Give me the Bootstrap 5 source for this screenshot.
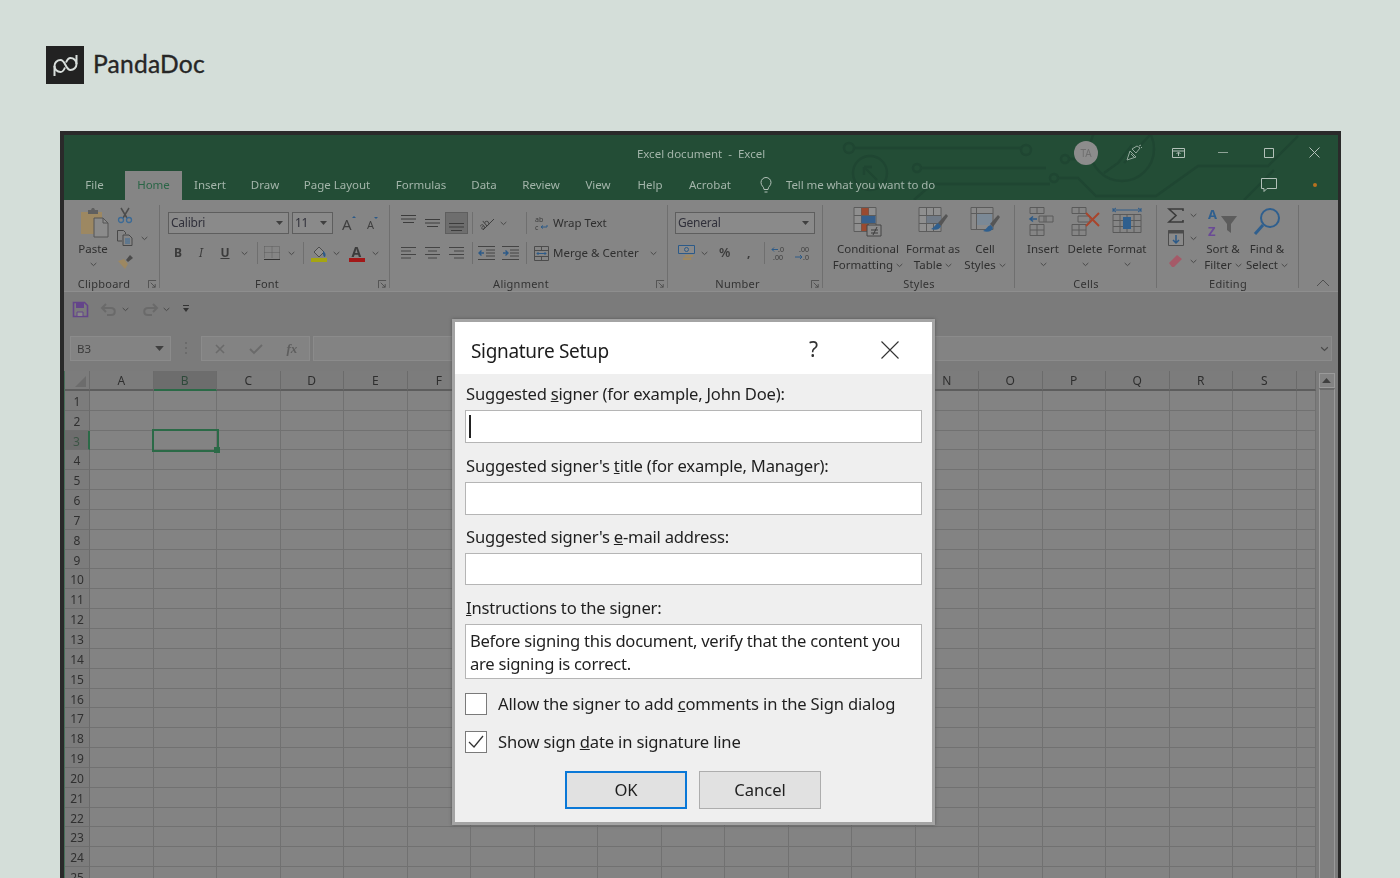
<!DOCTYPE html>
<html lang="en"><head><meta charset="utf-8"><title>PandaDoc - Signature Setup</title>
<link href="https://cdn.jsdelivr.net/npm/bootstrap@5.3.0/dist/css/bootstrap.min.css" rel="stylesheet">
<style>
html,body{height:878px;overflow:hidden}
body{background:#d4ded9;font-family:"Noto Sans","Open Sans",sans-serif;color:#2b2b2b;position:relative}
.brand{padding:46px 0 0 46px;height:84px;gap:9px}
.brand svg{width:38px;height:38px;display:block}
.brand span{font:400 24.6px/36px Lato,Inter,sans-serif;color:#262626;letter-spacing:.2px;-webkit-text-stroke:.35px #262626;padding-bottom:2px}
.win{margin:47px 59px 0 60px;border:solid #2a2a2a;border-width:4px 3px 0 4px;height:760px;background:#7b7b7b;filter:blur(.4px)}
svg{flex:none;overflow:visible}
.chrome{background:#234d36;position:relative;overflow:hidden}
.titlebar{height:35px;color:#a3b5aa;font-size:11.5px;position:relative}
.titlebar>.ttl{flex:1;text-align:center;padding-top:3px}
.wb{height:35px;justify-content:center}
.w44{width:44px}.w46{width:46px}.w52{width:52px}
.rightctl{padding-right:2px}
.lspacer{width:278px;flex:none}
.avatar{width:24px;height:24px;border-radius:50%;background:#8c8c8c;color:#6f6f6f;font-size:10px;line-height:24px;text-align:center}
.circuit{position:absolute;left:0;top:0;width:1274px;height:65px;pointer-events:none;overflow:hidden}
.tabs{height:30px;color:#a3b5aa;font-size:11.5px;position:relative}
.tab{text-align:center;line-height:30px;flex:none}
.tab.on{background:#858585;color:#2a6546;margin-top:1px;line-height:28px}
.t48{width:48px}.t54{width:54px}.t56{width:56px}.t57{width:57px}.t61{width:61px}.t64{width:64px}.t66{width:66px}.t78{width:78px}.t90{width:90px}
.bulb{margin-left:18px}
.tell{margin-left:14px;white-space:nowrap;letter-spacing:-.1px}
.cmt-dot{margin:0 21px 0 36px}
.ribbon{height:92px;background:#858585;border-bottom:1px solid #8e8e8e;font-size:11.5px;color:#2f2f2f}
.rg{height:92px;flex:none;display:flex;flex-direction:column;position:relative}
.rg:after{content:"";position:absolute;right:0;top:5px;bottom:4px;width:1px;background:#6f6f6f}
.rg-body{height:76px;flex:none}
.rg-label{height:16px;display:flex;font-size:11px;line-height:15px;letter-spacing:.25px;color:#333}
.rg-label span{flex:1;text-align:center}
.launch{width:16px;flex:none;padding:4px 0 0 4px}
.launch svg{display:block}
.c-clip{width:96px}.c-font{width:230px}.c-align{width:278px}.c-num{width:155px}.c-sty{width:192px}.c-cell{width:142px}.c-edit{width:142px}
.stack{padding-top:12px;display:flex;flex-direction:column;gap:8px}
.r22{height:22px;display:flex;align-items:center}
.at{align-self:flex-start;margin-top:3px}
.combo{height:22px;border:1px solid #5e5e5e;background:#8a8a8a;display:flex;align-items:center;justify-content:space-between;padding:0 5px 0 2px;font-size:12px;letter-spacing:-.25px;color:#30303a}
.w121{width:121px}.w41{width:41px}.w140{width:140px}
.bi{font:700 12px/22px "Noto Sans",sans-serif;width:12px;text-align:center;color:#3b3b3b}
.bi.i{font-style:italic;font-weight:400}.bi.u{text-decoration:underline}
.pct{width:13px;font-size:13px;font-weight:600;color:#3c3c3c}
.cma{width:6px;font-size:12px;font-weight:700;color:#3c3c3c}
.vs{width:1px;height:22px;background:#6f6f6f;flex:none}
.pressed{width:23px;height:22px;background:#6e6e6e;border:1px solid #5e5e5e;display:flex;align-items:flex-end;justify-content:center;padding-bottom:2px}
.pressed svg{display:block}
.big{padding-top:7px;display:flex;flex-direction:column;align-items:center;text-align:center;line-height:16px;white-space:nowrap;flex:none}
.big svg.ic{width:30px;height:30px;margin-bottom:4px}
.big .cv{margin-top:5px}
.w72{width:72px}.w58{width:58px}.w46b{width:46px}.w42{width:42px}.w44b{width:44px}.w33{width:33px}
.small3{padding-top:7px;display:flex;flex-direction:column;gap:7px;flex:none}
.small3>div{height:16px;display:flex;align-items:center}
.l2{margin-left:2px}.l3{margin-left:3px}.l4{margin-left:4px}.l5{margin-left:5px}.l6{margin-left:6px}.l7{margin-left:7px}.l8{margin-left:8px}.l9{margin-left:9px}.l10{margin-left:10px}.l11{margin-left:11px}.l12{margin-left:12px}.l13{margin-left:13px}.l15{margin-left:15px}.l19{margin-left:19px}
.collapse-up{flex:1;display:flex;justify-content:flex-end;align-items:flex-end;padding:0 8px 4px 0}
.qat{height:40px;background:#7b7b7b;padding-left:9px;padding-bottom:6px}
.fbar{height:39px;background:#7b7b7b;padding:4px 6px 10px 6px;font-size:11.5px}
.fbox{height:25px;background:#838383;border:1px solid #8b8b8b;display:flex;align-items:center}
.namebox{width:101px;justify-content:space-between;padding:0 6px;color:#3a3a3a}
.dots{width:30px;justify-content:center}
.fxbox{width:109px;justify-content:space-around}
.fxbox i{font:italic 700 13px "Liberation Serif",serif;color:#5e5e5e}
.finput{flex:1;margin-left:3px;justify-content:flex-end;padding-right:2px}
.sheet{padding-left:1px;background:#47705a}
.grid{display:grid;grid-template-columns:25px repeat(19,63.5px) 19px;grid-auto-rows:19.85px;font-size:12px;background:#838383}
.grid>div{border-right:1px solid #717171;border-bottom:1px solid #717171;position:relative}
.grid .ch{background:#7c7c7c;color:#2f2f2f;text-align:center;line-height:20px;border-bottom:2px solid #5d5d5d;border-right-color:#6b6b6b}
.grid .rh{background:#7c7c7c;color:#303030;text-align:center;line-height:21px;border-right:1px solid #6b6b6b;border-bottom-color:#6e6e6e}
.grid .ch.sel{background:#6d6d6d;border-bottom-color:#2b6a47;color:#2f4a3b}
.grid .rh.sel{background:#6d6d6d;border-right:2px solid #2b6a47;color:#3d5546}
.grid .corner:after{content:"";position:absolute;right:3px;bottom:2px;border-style:solid;border-width:0 0 11px 11px;border-color:transparent transparent #6c6c6c transparent}
.grid .cur{outline:2px solid #2b6a47;outline-offset:0;z-index:2}
.grid .cur:after{content:"";position:absolute;right:-4px;bottom:-4px;width:6px;height:6px;background:#2b6a47}
.vbar{flex:1;padding:2px 0 0 3px;background:#7b7b7b}
.vbar .up{width:16px;height:15px;border:1px solid #9a9a9a;background:#838383;display:flex;align-items:center;justify-content:center}
.vbar .tr{width:16px;height:500px;border:1px solid #9a9a9a;background:#7f7f7f;border-top:2px solid #6a6a6a}
.dlg{position:absolute;left:452px;top:319px;width:483px;height:506px;border:3px solid #a4a4a4;background:#efefef;box-shadow:0 0 3px #555;filter:blur(.25px);font-size:16.6px;letter-spacing:-.22px;color:#1f1f1f;z-index:5}
.dlg-head{height:52px;background:#fff;padding:0 33px 0 16px}
.dlg-head h1{font:400 19px/58px "Noto Sans",sans-serif;letter-spacing:-.32px;margin:0;flex:1;color:#1c1c1c}
.dlg-q{font-size:21px;width:72px;color:#333;line-height:54px}
.dlg-x{margin-top:19px}
.dlg-body{padding:9px 10px 0 10px}
.flabel{display:block;height:24px;line-height:22px;margin:11px 0 3px 1px;white-space:nowrap}
.flabel.first{margin-top:0}.flabel.t12{margin-top:12px}
.dlg .form-control{border:1px solid #b5b5b5;border-radius:0;height:33px;padding:0;background:#fff;box-shadow:none}
.dlg .h32{height:32px}
.dlg .ta{height:55px;padding:4px 4px 0;font-size:16.6px;line-height:23px;letter-spacing:-.26px;color:#1f1f1f}
.caret-bar{position:absolute;left:4px;top:5px;width:2px;height:23px;background:#222}
.chk{height:22px;display:flex;align-items:center;gap:11px;margin:0;line-height:22px;letter-spacing:-.17px}
.chk .box{width:22px;height:22px;border:1px solid #7a7a7a;background:#fff;flex:none;display:flex;align-items:center;justify-content:center}
.chk1{margin-top:14px}.chk2{margin-top:16px}
.btns{margin-top:18px;gap:12px;padding-left:100px}
.dlg .btn{width:122px;height:38px;border-radius:0;background:#e1e1e1;border:1px solid #adadad;font-size:16.6px;color:#1f1f1f;padding:0;line-height:36px}
.dlg .btn.def{border:2px solid #0a78d7;line-height:34px}
</style></head><body>
<svg width="0" height="0" class="position-absolute"><defs>
<symbol id="cv" viewBox="0 0 7 5"><path d="M.7 1 3.500 3.600 6.300 1" fill="none" stroke="#4a4a4a" stroke-width="1"/></symbol>
<symbol id="tri" viewBox="0 0 7 4"><path d="M0 0h7L3.500 4z" fill="#3f3f3f"/></symbol>
<symbol id="lau" viewBox="0 0 10 10"><path d="M.5 9V.5H9M3 3l5 5M8 4.500V8H4.500" fill="none" stroke="#4c4c4c"/></symbol>
<symbol id="lines1" viewBox="0 0 15 8"><path d="M0 .5h15M0 4h15M2 7.500h11" stroke="#3c3c3c"/></symbol>
<symbol id="alL" viewBox="0 0 15 12"><path d="M0 .5h15M0 4h10M0 7.500h15M0 11h10" stroke="#444"/></symbol>
<symbol id="alC" viewBox="0 0 15 12"><path d="M0 .5h15M3 4h9M0 7.500h15M3 11h9" stroke="#444"/></symbol>
<symbol id="alR" viewBox="0 0 15 12"><path d="M0 .5h15M5 4h10M0 7.500h15M5 11h10" stroke="#444"/></symbol>
<symbol id="indL" viewBox="0 0 17 14"><path d="M0 .5h17M8 4h9M8 7h9M8 10h9M0 13.500h17" stroke="#444"/><path d="M6 7H1M3.500 4.500 1 7l2.500 2.500" fill="none" stroke="#2c5a88" stroke-width="1.400"/></symbol>
<symbol id="indR" viewBox="0 0 17 14"><path d="M0 .5h17M8 4h9M8 7h9M8 10h9M0 13.500h17" stroke="#444"/><path d="M1 7h5M3.500 4.500 6 7 3.500 9.500" fill="none" stroke="#2c5a88" stroke-width="1.400"/></symbol>
<symbol id="gridic" viewBox="0 0 30 30"><path d="M1 .5h22v24H1zM1 8.500h22M1 16.500h22M8.500.5v24M15.500.5v24" fill="#8f8f8f" stroke="#5c5c5c"/></symbol>
</defs></svg>

<header class="brand d-flex align-items-center">
<svg viewBox="0 0 38 38" role="img" aria-label="PandaDoc logo"><rect width="38" height="38" fill="#222"/><path d="M8.500 30V20a6 6 0 0 1 6-6c5 0 5 10 10 10a6 6 0 0 0 6-6V9" fill="none" stroke="#d8dedb" stroke-width="2"/><path d="M8.500 20a6 6 0 0 0 6 6c2.500 0 3.500-2 4.500-4.500M30.500 18a6 6 0 0 0-6-6c-2.500 0-3.500 2-4.500 4.500" fill="none" stroke="#d8dedb" stroke-width="2"/></svg>
<span>PandaDoc</span>
</header>

<main class="win d-flex flex-column">
<div class="chrome">
<svg class="circuit" viewBox="0 0 1274 65"><g fill="none" stroke="#1f4632" stroke-width="2.400"><circle cx="962" cy="15" r="5"/><path d="M790 13H957"/><circle cx="785" cy="13" r="5"/><circle cx="1058" cy="14" r="32"/><circle cx="806" cy="38" r="17"/><path d="M800 32l13 13M800 32h8M800 32v8"/><circle cx="853" cy="33" r="4"/><circle cx="1001" cy="24" r="4"/><circle cx="990" cy="43" r="4"/><path d="M857 33h125M994 43h20l18 18h60l42-30h70l30-30M1005 24h24M1060 28 1086 0M850 65l18-16h118M1180 65l30-30"/><path d="M1040 38l14-10 14-18"/></g></svg>
<div class="titlebar d-flex align-items-center">
<div class="lspacer"></div><div class="ttl position-relative">Excel document&nbsp; -&nbsp; Excel</div>
<div class="d-flex position-relative rightctl"><div class="wb d-flex align-items-center w52"><div class="avatar">TA</div></div>
<div class="wb d-flex align-items-center w44"><svg width="16" height="16" viewBox="0 0 16 16"><path d="M1 15l3-9 6 6zM5 9l3 3M6 4l4 4 4-5-3-2zM13 1l2-1M15 3l1-1" fill="none" stroke="#93a89c"/></svg></div>
<div class="wb d-flex align-items-center w44"><svg width="13" height="10" viewBox="0 0 13 10"><path d="M.5.5h12v9H.5zM.5 3h12M6.500 8V4.500M4.500 6l2-2 2 2" fill="none" stroke="#b3c1b9"/></svg></div>
<div class="wb d-flex align-items-center w46"><svg width="10" height="1"><path d="M0 .5h10" stroke="#8fa397"/></svg></div>
<div class="wb d-flex align-items-center w46"><svg width="10" height="10"><path d="M.5.5h9v9h-9z" fill="none" stroke="#b3c1b9"/></svg></div>
<div class="wb d-flex align-items-center w44"><svg width="11" height="11"><path d="M.5.5l10 10M10.500.5l-10 10" stroke="#b3c1b9"/></svg></div></div>
</div>
<nav class="tabs d-flex">
<div class="tab t61">File</div><div class="tab on t57">Home</div><div class="tab t56">Insert</div><div class="tab t54">Draw</div><div class="tab t90">Page Layout</div><div class="tab t78">Formulas</div><div class="tab t48">Data</div><div class="tab t66">Review</div><div class="tab t48">View</div><div class="tab t56">Help</div><div class="tab t64">Acrobat</div>
<svg class="align-self-center bulb" width="12" height="16" viewBox="0 0 12 16"><path d="M4 12.500C4 9.500 1 9 1 5.500a5 5 0 0 1 10 0C11 9 8 9.500 8 12.500zM4.500 15h3" fill="none" stroke="#b3c1b9"/></svg>
<div class="tab tell">Tell me what you want to do</div>
<div class="ms-auto d-flex align-items-center">
<svg width="16" height="15" viewBox="0 0 16 15"><path d="M.5.5h15v10H6l-3 3v-3H.5z" fill="none" stroke="#b3c1b9"/></svg>
<svg class="cmt-dot" width="4" height="4"><circle cx="2" cy="2" r="2" fill="#b7711f"/></svg>
</div>
</nav>
</div>

<section class="ribbon d-flex">
<div class="rg c-clip">
 <div class="rg-body d-flex">
  <div class="big l7 w44b">
   <svg class="ic" viewBox="-2 0 30 30"><path d="M1 5h21v22H1z" fill="#9d8862"/><path d="M8 3h3l1-2h2l1 2h3v4H8z" fill="#5f5f5f"/><path d="M14 11h9l5 5v14H14z" fill="#8b8b8b" stroke="#555"/><path d="M23 11v5h5" fill="none" stroke="#555"/></svg>
   <div>Paste</div><svg class="cv" width="7" height="5"><use href="#cv"/></svg></div>
  <div class="small3 l2">
   <div><svg width="16" height="16" viewBox="0 0 16 16"><path d="M4 1l6 10M12 1L6 11" stroke="#4c4c4c" stroke-width="1.500"/><circle cx="4" cy="13" r="2.500" fill="none" stroke="#3b6a96" stroke-width="1.300"/><circle cx="12" cy="13" r="2.500" fill="none" stroke="#3b6a96" stroke-width="1.300"/></svg></div>
   <div><svg width="16" height="16" viewBox="0 0 16 16"><path d="M.5.5h6l2 2V4M.5.5V11H5M6 5h6l3 3v7.500H6z" fill="none" stroke="#484848"/><path d="M8 9h5M8 11h5M8 13h5" stroke="#3b6a96"/></svg><svg class="l8" width="7" height="5"><use href="#cv"/></svg></div>
   <div><svg width="16" height="15" viewBox="0 0 16 15"><path d="M1 7l6-2 4 5-3 5z" fill="#9d8862"/><path d="M9 6l4-5 3 3-5 4z" fill="#4b4b4b"/></svg></div>
  </div>
 </div>
 <div class="rg-label"><span>Clipboard</span><div class="launch"><svg width="9" height="9"><use href="#lau"/></svg></div></div>
</div>

<div class="rg c-font">
 <div class="rg-body stack">
  <div class="r22"><div class="combo w121 l8">Calibri<svg width="7" height="4"><use href="#tri"/></svg></div><div class="combo w41 l3">11<svg width="7" height="4"><use href="#tri"/></svg></div>
   <svg class="l9" width="14" height="16" viewBox="0 0 14 16"><text x="0" y="15" font-size="15" fill="#3f3f3f" font-family="Noto Sans">A</text><path d="M10 3l2-2 2 2z" fill="#2c5a88"/></svg>
   <svg class="l11" width="11" height="14" viewBox="0 0 11 14"><text x="0" y="13" font-size="11" fill="#3f3f3f" font-family="Noto Sans">A</text><path d="M7 1h4L9 3z" fill="#2c5a88"/></svg></div>
  <div class="r22"><div class="bi l12">B</div><div class="bi i l11">I</div><div class="bi u l12">U</div><svg class="l10" width="7" height="5"><use href="#cv"/></svg><div class="vs l9"></div>
   <svg class="l6" width="16" height="14" viewBox="0 0 16 14"><path d="M.5.5h15v12M.5.5v12M8 .5v12M.5 6.500h15" fill="none" stroke="#5c5c5c" stroke-dasharray="1 1"/><path d="M0 13.500h16" stroke="#333"/></svg><svg class="l8" width="7" height="5"><use href="#cv"/></svg><div class="vs l8"></div>
   <svg class="l7" width="16" height="17" viewBox="0 0 16 17"><path d="M3 7l5-5 5 5-5 5z" fill="#8f8f8f" stroke="#4c4c4c"/><path d="M12 6c3 2 3 4 2 6-2 0-2-3-2-6" fill="#2c5a88"/><path d="M0 13h16v4H0z" fill="#a5a512"/></svg><svg class="l6" width="7" height="5"><use href="#cv"/></svg>
   <svg class="l9" width="16" height="17" viewBox="0 0 16 17"><text x="2.500" y="12" font-size="14" font-weight="700" fill="#3c3c3c" font-family="Noto Sans">A</text><path d="M0 13h16v4H0z" fill="#a21818"/></svg><svg class="l7" width="7" height="5"><use href="#cv"/></svg></div>
 </div>
 <div class="rg-label"><span>Font</span><div class="launch"><svg width="9" height="9"><use href="#lau"/></svg></div></div>
</div>

<div class="rg c-align">
 <div class="rg-body stack">
  <div class="r22"><svg class="l11 at" width="15" height="8"><use href="#lines1"/></svg><svg class="l9" width="15" height="8"><use href="#lines1"/></svg><div class="pressed l5"><svg width="15" height="8"><use href="#lines1"/></svg></div><div class="vs l4"></div>
   <svg class="l6" width="16" height="15" viewBox="0 0 16 15"><text x="0" y="11" font-size="9" fill="#3f3f3f" transform="rotate(-40 6 8)" font-family="Noto Sans">ab</text><path d="M4 14 15 3" stroke="#3f3f3f"/></svg><svg class="l5" width="7" height="5"><use href="#cv"/></svg><div class="vs l19"></div>
   <svg class="l8" width="13" height="15" viewBox="0 0 13 15"><text x="0" y="5.500" font-size="7" fill="#3c3c3c" font-family="Noto Sans">ab</text><text x="0" y="14" font-size="7" fill="#3c3c3c" font-family="Noto Sans">c</text><path d="M6 11h6v-2M6 11l2-1.500M6 11l2 1.500" fill="none" stroke="#2c5a88"/></svg><div class="l5 text-nowrap">Wrap Text</div></div>
  <div class="r22"><svg class="l11" width="15" height="12"><use href="#alL"/></svg><svg class="l9" width="15" height="12"><use href="#alC"/></svg><svg class="l9" width="15" height="12"><use href="#alR"/></svg><div class="vs l8"></div>
   <svg class="l5" width="17" height="14"><use href="#indL"/></svg><svg class="l7" width="17" height="14"><use href="#indR"/></svg><div class="vs l7"></div>
   <svg class="l7" width="15" height="15" viewBox="0 0 15 15"><path d="M.5.5h14v14H.500zM.5 4.500h14M.5 10.500h14M7.500.5v4M7.500 10.500v4" fill="none" stroke="#4c4c4c"/><path d="M3 7.500h9M3 7.500l1.500-1.500M3 7.500 4.500 9M12 7.500 10.500 6M12 7.500 10.500 9" fill="none" stroke="#2c5a88"/></svg><div class="l4 text-nowrap">Merge &amp; Center</div><svg class="l11" width="7" height="5"><use href="#cv"/></svg></div>
 </div>
 <div class="rg-label"><span>Alignment</span><div class="launch"><svg width="9" height="9"><use href="#lau"/></svg></div></div>
</div>

<div class="rg c-num">
 <div class="rg-body stack">
  <div class="r22"><div class="combo w140 l7">General<svg width="7" height="4"><use href="#tri"/></svg></div></div>
  <div class="r22"><svg class="l10" width="17" height="16" viewBox="0 0 17 16"><path d="M.5.5h16v8H.5z" fill="#8a8a8a" stroke="#2c5a88"/><circle cx="8.500" cy="4.500" r="2" fill="none" stroke="#2c5a88"/><path d="M7 10h8v2H7zM5 12.500h8V15H5z" fill="#9d8862"/></svg><svg class="l6" width="7" height="5"><use href="#cv"/></svg>
   <div class="l11 pct">%</div><div class="l15 cma">,</div><div class="vs l11"></div>
   <svg class="l7" width="16" height="15" viewBox="0 0 16 15"><text x="6" y="6" font-size="7" fill="#3c3c3c" font-family="Noto Sans">.0</text><text x="1" y="14" font-size="7" fill="#3c3c3c" font-family="Noto Sans">.00</text><path d="M6 3.500H0M2 1.500l-2 2 2 2" fill="none" stroke="#2c5a88"/></svg>
   <svg class="l7" width="16" height="15" viewBox="0 0 16 15"><text x="4" y="6" font-size="7" fill="#3c3c3c" font-family="Noto Sans">.00</text><text x="8" y="14" font-size="7" fill="#3c3c3c" font-family="Noto Sans">.0</text><path d="M0 11h7M5 9l2 2-2 2" fill="none" stroke="#2c5a88"/></svg></div>
 </div>
 <div class="rg-label"><span>Number</span><div class="launch"><svg width="9" height="9"><use href="#lau"/></svg></div></div>
</div>

<div class="rg c-sty">
 <div class="rg-body d-flex">
  <div class="big l9 w72"><svg class="ic" viewBox="0 0 30 30"><use href="#gridic"/><path d="M8.500 1h7v7h-7z" fill="#9a4a30"/><path d="M8.500 9h14v7h-14z" fill="#365f8c"/><path d="M8.500 17h7v7h-7z" fill="#9a4a30"/><path d="M14 18h14v11H14z" fill="#8a8a8a" stroke="#444"/><path d="M18 23h7M18 26h7M20 28l4-8" stroke="#3c3c3c" fill="none"/></svg><div>Conditional</div><div>Formatting <svg width="7" height="5"><use href="#cv"/></svg></div></div>
  <div class="big w58"><svg class="ic" viewBox="0 0 30 30"><use href="#gridic"/><path d="M8.500 9H23v7H8.500z" fill="#707a86"/><path d="M13 22c4-2 5-6 8-6l2 3c-1 3-5 5-10 3z" fill="#2f5f8e"/><path d="M20 16 28 7l2 2-7 10z" fill="#555"/></svg><div>Format as</div><div>Table <svg width="7" height="5"><use href="#cv"/></svg></div></div>
  <div class="big w46b"><svg class="ic" viewBox="0 0 30 30"><path d="M1 .5h22v22H1zM1 6.500h22M6.500.5v22" fill="#8a8a8a" stroke="#5c5c5c"/><path d="M7 7h15v11H7z" fill="#7b8996"/><path d="M13 24c4-2 5-6 8-6l2 3c-1 3-5 5-10 3z" fill="#2f5f8e"/><path d="M20 17 28 8l2 2-7 10z" fill="#555"/></svg><div>Cell</div><div>Styles <svg width="7" height="5"><use href="#cv"/></svg></div></div>
 </div>
 <div class="rg-label"><span>Styles</span></div>
</div>

<div class="rg c-cell">
 <div class="rg-body d-flex">
  <div class="big l7 w42"><svg class="ic" viewBox="0 0 30 30"><path d="M2 .5h14v6H2zM9 .5v6M11 9h14v6H11zM18 9v6M16 9v6M2 17.500h14v11H2zM2 23h14M9 17.500v11" fill="none" stroke="#5a5a5a"/><path d="M9 12H2M5 9.500 2 12l3 2.500" fill="none" stroke="#2c5a88" stroke-width="1.500"/></svg><div>Insert</div><svg class="cv" width="7" height="5"><use href="#cv"/></svg></div>
  <div class="big w42"><svg class="ic" viewBox="0 0 30 30"><path d="M2 .5h14v6H2zM9 .5v6M8 9h12v6H8zM2 17.500h14v11H2zM2 23h14M9 17.500v11" fill="none" stroke="#5a5a5a"/><path d="M16 6 29 19M29 6 16 19" stroke="#a8452c" stroke-width="2"/></svg><div>Delete</div><svg class="cv" width="7" height="5"><use href="#cv"/></svg></div>
  <div class="big w42"><svg class="ic" viewBox="0 0 30 30"><path d="M1 7.500h28v18H1zM1 13.500h28M1 19.500h28M8 7.500v18M15 7.500v18M22 7.500v18" fill="none" stroke="#5a5a5a"/><path d="M11 10h8v12h-8z" fill="#2f5f8e"/><path d="M1 3h28M1 1v4M29 1v4M1 3l3-2M1 3l3 2M29 3l-3-2M29 3l-3 2" fill="none" stroke="#2c5a88"/></svg><div>Format</div><svg class="cv" width="7" height="5"><use href="#cv"/></svg></div>
 </div>
 <div class="rg-label"><span>Cells</span></div>
</div>

<div class="rg c-edit">
 <div class="rg-body d-flex">
  <div class="small3 l11 w33">
   <div><svg width="16" height="15" viewBox="0 0 16 15"><path d="M15 3V1H1l7 6.500L1 14h14v-2" fill="none" stroke="#3b3b3b" stroke-width="1.600"/></svg><svg class="l6" width="7" height="5"><use href="#cv"/></svg></div>
   <div><svg width="16" height="16" viewBox="0 0 16 16"><path d="M.5.5h15v15H.5z" fill="#8a8a8a" stroke="#4c4c4c"/><path d="M.5 0h15v3.500H.5z" fill="#4c4c4c"/><path d="M8 5v8M5 10l3 3 3-3" fill="none" stroke="#2c5a88" stroke-width="1.500"/></svg><svg class="l6" width="7" height="5"><use href="#cv"/></svg></div>
   <div><svg width="16" height="14" viewBox="0 0 16 14"><path d="M1 9l8-8 5 4-8 8H4z" fill="#a55a68"/></svg><svg class="l6" width="7" height="5"><use href="#cv"/></svg></div>
  </div>
  <div class="big w44b"><svg class="ic" viewBox="0 0 30 30"><text x="0" y="12" font-size="13" font-weight="700" fill="#2f5f8e" font-family="Noto Sans">A</text><text x="0" y="29" font-size="13" font-weight="700" fill="#6a4a96" font-family="Noto Sans">Z</text><path d="M13 9h16l-6 8v9l-4-3v-6z" fill="#5c5c5c"/></svg><div>Sort &amp;</div><div>Filter <svg width="7" height="5"><use href="#cv"/></svg></div></div>
  <div class="big w44b"><svg class="ic" viewBox="0 0 30 30"><circle cx="18" cy="11" r="9" fill="none" stroke="#2f5f8e" stroke-width="2"/><path d="M11 18 3 27" stroke="#2f5f8e" stroke-width="3"/></svg><div>Find &amp;</div><div>Select <svg width="7" height="5"><use href="#cv"/></svg></div></div>
 </div>
 <div class="rg-label"><span>Editing</span></div>
</div>
<div class="collapse-up"><svg width="14" height="8" viewBox="0 0 14 8"><path d="M1 7l6-6 6 6" fill="none" stroke="#4f4f4f"/></svg></div>
</section>

<div class="qat d-flex align-items-center">
<svg width="15" height="15" viewBox="0 0 15 15"><path d="M.5.5h11l3 3v11H.5z" fill="#7b7b7b" stroke="#64458a" stroke-width="1.600"/><path d="M3 1h8v5H3z" fill="#64458a"/><path d="M4 10h6v4.500H4z" fill="#8a8a8a" stroke="#64458a"/></svg>
<svg class="l13" width="16" height="13" viewBox="0 0 16 13"><path d="M1 5h9c5 0 5 7 0 7H6M5 1 1 5l4 4" fill="none" stroke="#6a6a6a" stroke-width="2"/></svg><svg class="l5" width="7" height="5"><use href="#cv"/></svg>
<svg class="l13" width="16" height="13" viewBox="0 0 16 13"><path d="M15 5H6C1 5 1 12 6 12h4M11 1l4 4-4 4" fill="none" stroke="#6a6a6a" stroke-width="2"/></svg><svg class="l5" width="7" height="5"><use href="#cv"/></svg>
<svg class="l13" width="6" height="8" viewBox="0 0 6 8"><path d="M0 .5h6" stroke="#333"/><path d="M0 3h6L3 7z" fill="#333"/></svg>
</div>

<div class="fbar d-flex">
<div class="fbox namebox">B3<svg width="9" height="5" viewBox="0 0 7 4"><use href="#tri"/></svg></div>
<div class="d-flex dots align-items-center"><svg width="2" height="13"><path d="M1 0v13" stroke="#5c5c5c" stroke-dasharray="2 3"/></svg></div>
<div class="fbox fxbox"><svg width="12" height="12" viewBox="0 0 12 12"><path d="M2 2l8 8M10 2l-8 8" stroke="#6a6a6a" stroke-width="1.600"/></svg><svg width="14" height="12" viewBox="0 0 14 12"><path d="M1 6l4 4 8-8" fill="none" stroke="#6a6a6a" stroke-width="1.800"/></svg><i>fx</i></div>
<div class="fbox finput"><svg width="9" height="6" viewBox="0 0 7 5"><use href="#cv"/></svg></div>
</div>

<div class="d-flex sheet">
<div class="grid" id="grid"></div>
<div class="vbar"><div class="up"><svg width="9" height="5" viewBox="0 0 7 4"><path d="M0 4h7L3.500 0z" fill="#3f3f3f"/></svg></div><div class="tr"></div></div>
</div>
</main>

<section class="dlg" role="dialog" aria-label="Signature Setup">
<div class="dlg-head d-flex align-items-start"><h1>Signature Setup</h1><div class="dlg-q">?</div><svg class="dlg-x" width="18" height="18" viewBox="0 0 18 18"><path d="M.5.5l17 17M17.500.5l-17 17" stroke="#333" stroke-width="1.100"/></svg></div>
<form class="dlg-body">
<label class="flabel first">Suggested <u>s</u>igner (for example, John Doe):</label>
<div class="position-relative"><input class="form-control" type="text" aria-label="Suggested signer"><span class="caret-bar"></span></div>
<label class="flabel t12">Suggested signer's <u>t</u>itle (for example, Manager):</label>
<input class="form-control" type="text" aria-label="Suggested signer's title">
<label class="flabel">Suggested signer's <u>e</u>-mail address:</label>
<input class="form-control h32" type="text" aria-label="Suggested signer's e-mail address">
<label class="flabel t12"><u>I</u>nstructions to the signer:</label>
<div class="form-control ta">Before signing this document, verify that the content you<br>are signing is correct.</div>
<div class="chk chk1"><span class="box"></span><span>Allow the signer to add <u>c</u>omments in the Sign dialog</span></div>
<div class="chk chk2"><span class="box"><svg width="16" height="14" viewBox="0 0 16 14"><path d="M1 7l5 5L15 1" fill="none" stroke="#333" stroke-width="1.300"/></svg></span><span>Show sign <u>d</u>ate in signature line</span></div>
<div class="btns d-flex"><button type="button" class="btn def">OK</button><button type="button" class="btn">Cancel</button></div>
</form>
</section>

<script>
var g=document.getElementById('grid'),h='<div class="ch corner"></div>',L='ABCDEF       NOPQRS'.split('');
L.forEach(function(c,n){h+='<div class="ch'+(n==1?' sel':'')+'">'+c+'</div>'});h+='<div class="ch"></div>';
for(var r=1;r<=25;r++){h+='<div class="rh'+(r==3?' sel':'')+'">'+r+'</div>';
for(var i=0;i<20;i++)h+='<div'+(r==3&&i==1?' class="cur"':'')+'></div>';}
g.innerHTML=h;
</script>
<script src="https://cdn.jsdelivr.net/npm/bootstrap@5.3.0/dist/js/bootstrap.bundle.min.js"></script>
</body></html>
